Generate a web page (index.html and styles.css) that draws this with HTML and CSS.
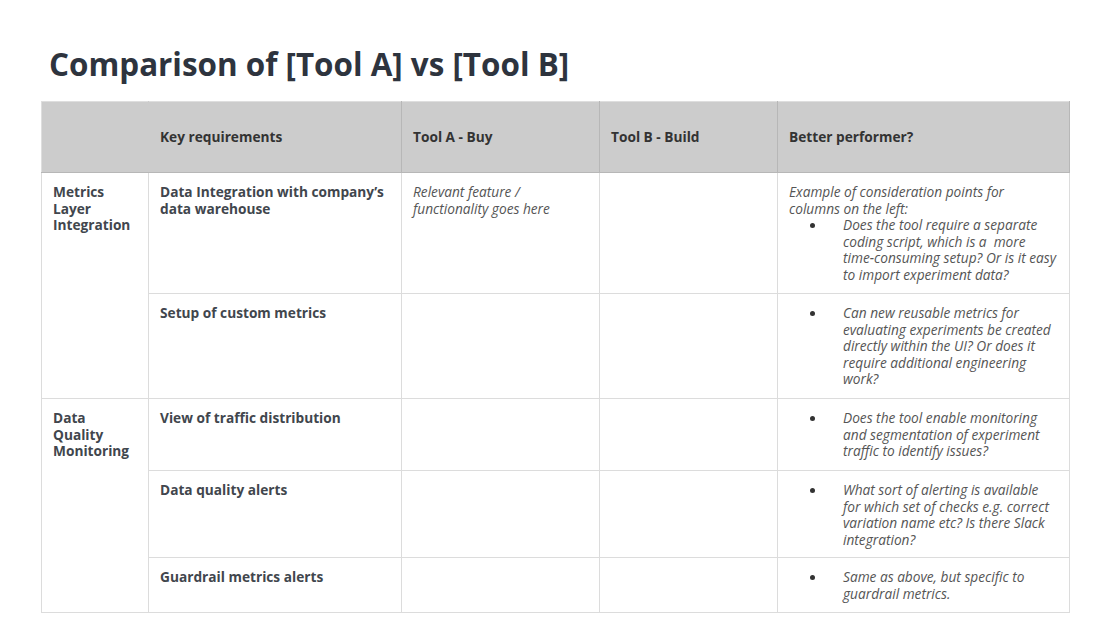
FILE: index.html
```html
<!DOCTYPE html>
<html>
<head>
<meta charset="utf-8">
<link rel="stylesheet" href="styles.css">
</head>
<body>
<div class="page">
  <h1 class="title">Comparison of [Tool A] vs [Tool B]</h1>
  <table class="cmp">
    <colgroup>
      <col class="c1"><col class="c2"><col class="c3"><col class="c4"><col class="c5">
    </colgroup>
    <thead>
      <tr class="head">
        <th class="h1"></th>
        <th class="h2">Key requirements</th>
        <th>Tool A - Buy</th>
        <th>Tool B - Build</th>
        <th>Better performer?</th>
      </tr>
    </thead>
    <tbody>
      <tr class="r1">
        <td class="group" rowspan="2">Metrics<br>Layer<br>Integration</td>
        <td class="req">Data Integration with company’s data warehouse</td>
        <td class="it">Relevant feature / functionality goes here</td>
        <td></td>
        <td class="it">Example of consideration points for columns on the left:
          <ul><li>Does the tool require a separate coding script, which is a&nbsp; more time-consuming setup? Or is it easy to import experiment data?</li></ul>
        </td>
      </tr>
      <tr class="r2">
        <td class="req">Setup of custom metrics</td>
        <td></td>
        <td></td>
        <td class="it"><ul><li>Can new reusable metrics for evaluating experiments be created directly within the UI? Or does it require additional engineering work?</li></ul></td>
      </tr>
      <tr class="r3">
        <td class="group" rowspan="3">Data<br>Quality<br>Monitoring</td>
        <td class="req">View of traffic distribution</td>
        <td></td>
        <td></td>
        <td class="it"><ul><li>Does the tool enable monitoring and segmentation of experiment traffic to identify issues?</li></ul></td>
      </tr>
      <tr class="r4">
        <td class="req">Data quality alerts</td>
        <td></td>
        <td></td>
        <td class="it"><ul><li>What sort of alerting is available for which set of checks e.g. correct variation name etc? Is there Slack integration?</li></ul></td>
      </tr>
      <tr class="r5">
        <td class="req">Guardrail metrics alerts</td>
        <td></td>
        <td></td>
        <td class="it"><ul><li>Same as above, but specific to guardrail metrics.</li></ul></td>
      </tr>
    </tbody>
  </table>
</div>
</body>
</html>
```
FILE: styles.css
```css
html, body {
  margin: 0;
  padding: 0;
  background: #ffffff;
}
.page {
  padding: 44px 0 0 41px;
  font-family: "Open Sans", "DejaVu Sans", sans-serif;
}
.title {
  margin: 0 0 17px 8px;
  font-size: 31.4px;
  line-height: 40px;
  font-weight: 700;
  color: #2e343e;
}
.cmp {
  border-collapse: collapse;
  table-layout: fixed;
  width: 1029px;
  font-size: 13.7px;
  line-height: 16.5px;
}
.c1 { width: 107px; }
.c2 { width: 253px; }
.c3 { width: 198px; }
.c4 { width: 178px; }
.c5 { width: 292px; }
.cmp th {
  background: #cccccc;
  color: #333333;
  font-weight: 700;
  text-align: left;
  vertical-align: middle;
  padding: 0 11px;
  height: 70px;
  border: 1px solid #b7b7b7;
  border-top-color: #dedede;
}
.cmp th.h1 {
  border-right-color: #cccccc;
  border-left-color: #dedede;
}
.cmp th.h2 {
  border-left-color: #cccccc;
}
.cmp td {
  border: 1px solid #dcdcdc;
  vertical-align: top;
  padding: 11px 11px 0 11px;
  color: #444a50;
}
.cmp td.group,
.cmp td.req {
  font-weight: 700;
  color: #41464d;
}
.cmp td.it {
  font-style: italic;
  color: #555555;
}
.r1 td { height: 109px; }
.r2 td { height: 93px; }
.r3 td { height: 60px; }
.r4 td { height: 75px; }
.r5 td { height: 43px; }
.cmp ul {
  margin: 0;
  padding: 0 0 0 54px;
  list-style: none;
}
.cmp li {
  position: relative;
}
.cmp li::before {
  content: "";
  position: absolute;
  left: -33px;
  top: 6px;
  width: 5px;
  height: 5px;
  border-radius: 50%;
  background: #333333;
}
```
